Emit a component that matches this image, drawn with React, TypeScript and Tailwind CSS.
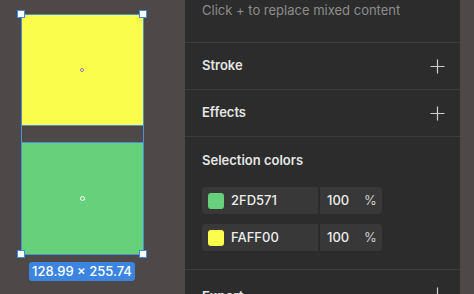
import React from 'react';

const PlusIcon = () => (
  <svg width="15" height="15" viewBox="0 0 15 15" className="text-[#cfcfcf]">
    <path d="M7.5 0.5v14M0.5 7.5h14" stroke="currentColor" strokeWidth="1.2" />
  </svg>
);

const Handle = ({ className }: { className: string }) => (
  <div className={`absolute w-[8px] h-[8px] bg-white border border-[#3f8be0] ${className}`} />
);

const ColorRow = ({ swatch, hex }: { swatch: string; hex: string }) => (
  <div className="flex h-[27px] w-[180px] rounded-[4px] bg-[#383838] items-center">
    <div className="flex items-center w-[118px] h-full pl-[6px] gap-[7px] border-r-2 border-[#2c2c2c]">
      <div className="w-[16px] h-[16px] rounded-[3px]" style={{ backgroundColor: swatch }} />
      <span className="text-[13px] font-medium text-[#ececec]">{hex}</span>
    </div>
    <span className="text-[13px] font-medium text-[#ececec] pl-[7px] w-[44px]">100</span>
    <span className="text-[13px] text-[#cfcfcf]">%</span>
  </div>
);

const Section = ({ title }: { title: string }) => (
  <div className="shrink-0 flex items-center justify-between h-[47px] pl-[17px] pr-[15px] border-b border-[#3c3c3c]">
    <span className="text-[13px] font-semibold text-[#e6e6e6]">{title}</span>
    <PlusIcon />
  </div>
);

export default function App() {
  return (
    <div className="flex w-[474px] h-[294px] overflow-hidden bg-[#4e4848]" style={{ fontFamily: 'Inter, "Noto Sans", sans-serif' }}>
      <div className="relative w-[185px] h-full shrink-0">
        <div className="absolute left-[21px] top-[14px] w-[123px] h-[112px] bg-[#fafd4c] border border-[#4a8fd8]" />
        <div className="absolute left-[21px] top-[125px] w-[123px] h-[18px] border-x border-[#4a8fd8]" />
        <div className="absolute left-[21px] top-[142px] w-[123px] h-[113px] bg-[#66d17a] border border-[#4a8fd8]" />
        <div className="absolute left-[80px] top-[68px] w-[4px] h-[4px] rounded-full border border-[#8a7a7a] bg-white" />
        <div className="absolute left-[80px] top-[196px] w-[5px] h-[5px] rounded-full border border-white bg-[#66d17a]" />
        <Handle className="left-[17px] top-[10px]" />
        <Handle className="left-[139px] top-[10px]" />
        <Handle className="left-[17px] top-[250px]" />
        <Handle className="left-[139px] top-[250px]" />
        <div className="absolute left-[29px] top-[262px] h-[19px] w-[106px] rounded-[3px] bg-[#3b85e0] flex items-center justify-center text-[13px] font-medium text-white">
          128.99 × 255.74
        </div>
      </div>
      <div className="w-[275px] h-full shrink-0 bg-[#2c2c2c] flex flex-col">
        <div className="shrink-0 h-[43px] pl-[17px] border-b border-[#3c3c3c]">
          <div className="text-[13px] text-[#8c8c8c] leading-[16px] pt-[2px]">Click + to replace mixed content</div>
        </div>
        <Section title="Stroke" />
        <Section title="Effects" />
        <div className="shrink-0 h-[133px] pl-[17px] pt-[15px] border-b border-[#3c3c3c]">
          <div className="text-[13px] font-semibold text-[#e6e6e6] leading-[16px]">Selection colors</div>
          <div className="flex flex-col gap-[10px] mt-[19px]">
            <ColorRow swatch="#66d17a" hex="2FD571" />
            <ColorRow swatch="#fafd4c" hex="FAFF00" />
          </div>
        </div>
        <div className="shrink-0 flex items-start justify-between pl-[17px] pr-[15px] pt-[17px]">
          <span className="text-[13px] font-semibold text-[#e6e6e6]">Export</span>
          <PlusIcon />
        </div>
      </div>
      <div className="flex-1 h-full" />
    </div>
  );
}
